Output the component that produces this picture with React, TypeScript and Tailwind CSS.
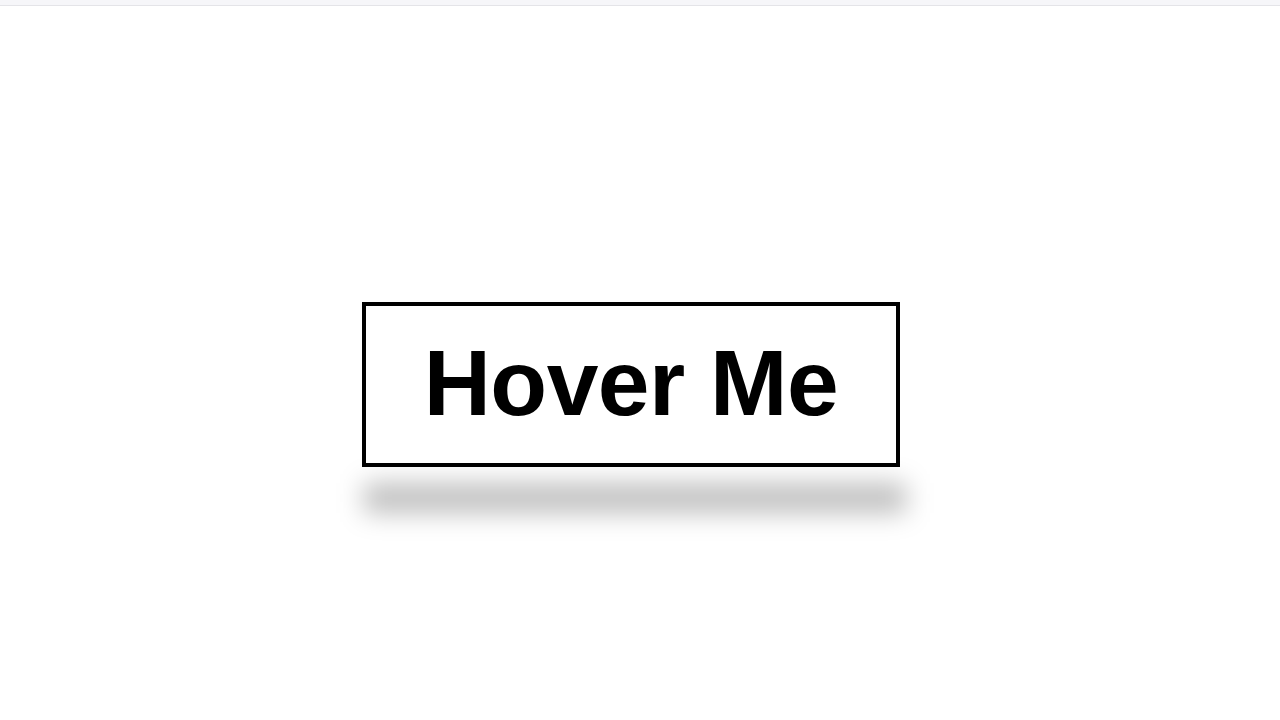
export default function App() {
  return (
    <div className="min-h-screen w-full bg-white" style={{ fontFamily: '"Liberation Sans", Arial, sans-serif' }}>
      {/* thin browser-ish strip at the very top */}
      <div className="h-[6px] w-full border-b border-[#e4e4e8] bg-[#f6f6f9]" />
      <div className="flex h-[714px] items-start justify-center pt-[296px]">
        <div className="relative mr-[18px]">
          {/* soft floating shadow under the button */}
          <div className="absolute left-[2px] right-[-6px] top-[181px] h-[30px] bg-black/25 blur-[13px]" />
          <button className="relative flex h-[165px] w-[538px] items-center justify-center border-[4px] border-black bg-white pb-[2px] text-[93px] font-bold leading-none tracking-[-0.5px] text-black">
            Hover Me
          </button>
        </div>
      </div>
    </div>
  );
}
